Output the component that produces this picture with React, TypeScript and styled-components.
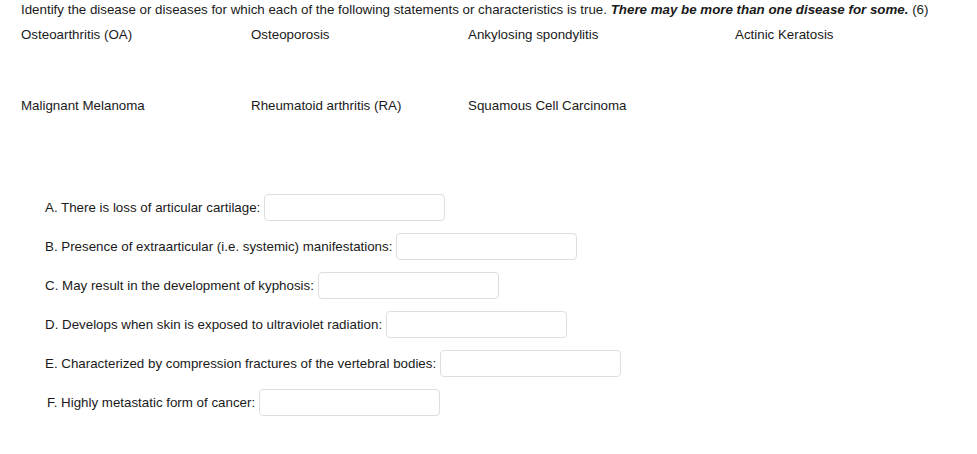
import React from 'react';
import styled, { createGlobalStyle } from 'styled-components';

const GlobalStyle = createGlobalStyle`
  body {
    margin: 0;
    background: #ffffff;
    font-family: "Liberation Sans", Arial, sans-serif;
    color: #1a1a1a;
  }
`;

const Page = styled.div`
  padding: 2px 0 0 21px;
  font-size: 13.33px;
`;

const Prompt = styled.p`
  margin: 0;
  line-height: 16px;
`;

const Emphasis = styled.strong`
  font-style: italic;
  font-weight: bold;
`;

const ChoiceGrid = styled.div`
  display: grid;
  grid-template-columns: 230px 217px 267px auto;
  grid-auto-rows: 16px;
  row-gap: 55px;
  margin-top: 9px;
`;

const Choice = styled.span`
  line-height: 16px;
  white-space: nowrap;
`;

const Questions = styled.div`
  display: flex;
  flex-direction: column;
  gap: 12px;
  margin-top: 80px;
  padding-left: 24px;
`;

const QuestionRow = styled.label<{ $indent?: number }>`
  display: flex;
  align-items: center;
  gap: 4px;
  height: 27px;
  padding-left: ${p => p.$indent ?? 0}px;
`;

const AnswerBox = styled.input`
  box-sizing: border-box;
  width: 181px;
  height: 27px;
  margin: 0;
  border: 1px solid #dedede;
  border-radius: 4px;
  background: #ffffff;
  font: inherit;
  padding: 0 6px;
  outline: none;
`;

const choices = [
  'Osteoarthritis (OA)',
  'Osteoporosis',
  'Ankylosing spondylitis',
  'Actinic Keratosis',
  'Malignant Melanoma',
  'Rheumatoid arthritis (RA)',
  'Squamous Cell Carcinoma',
];

const questions = [
  { text: 'A. There is loss of articular cartilage:' },
  { text: 'B. Presence of extraarticular (i.e. systemic) manifestations:' },
  { text: 'C. May result in the development of kyphosis:' },
  { text: 'D. Develops when skin is exposed to ultraviolet radiation:' },
  { text: 'E. Characterized by compression fractures of the vertebral bodies:' },
  { text: 'F. Highly metastatic form of cancer:', indent: 2 },
];

const App: React.FC = () => (
  <>
    <GlobalStyle />
    <Page>
      <Prompt>
        Identify the disease or diseases for which each of the following statements or characteristics is true.{' '}
        <Emphasis>There may be more than one disease for some.</Emphasis> (6)
      </Prompt>
      <ChoiceGrid>
        {choices.map(c => (
          <Choice key={c}>{c}</Choice>
        ))}
      </ChoiceGrid>
      <Questions>
        {questions.map(q => (
          <QuestionRow key={q.text} $indent={q.indent}>
            <span>{q.text}</span>
            <AnswerBox type="text" />
          </QuestionRow>
        ))}
      </Questions>
    </Page>
  </>
);

export default App;
